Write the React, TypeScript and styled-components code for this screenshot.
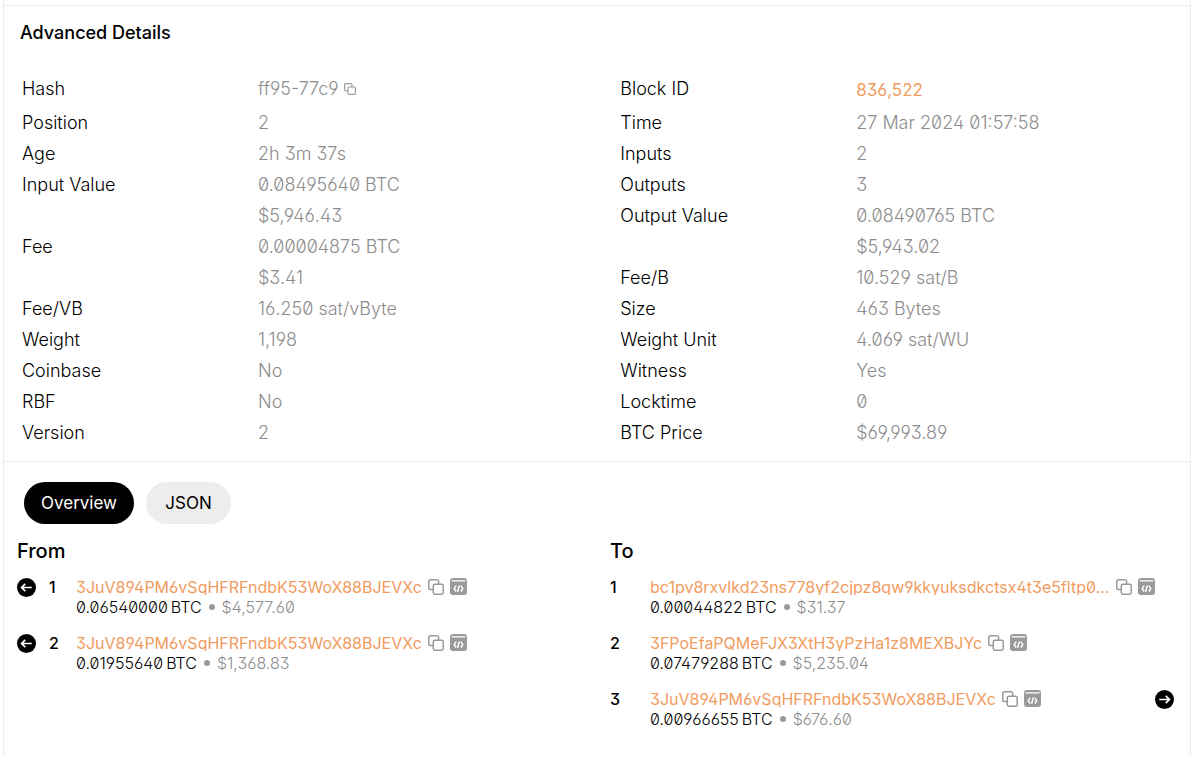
import React from "react";
import styled, { createGlobalStyle } from "styled-components";

const GlobalStyle = createGlobalStyle`
  *, *::before, *::after { box-sizing: border-box; }
  body {
    margin: 0;
    background: #fff;
    color: #000;
    font-family: Inter, "Liberation Sans", sans-serif;
    font-feature-settings: "zero" 1, "ss01" 1;
  }
  h2, h3, dl, dd, ol { margin: 0; padding: 0; }
  ol { list-style: none; }
  button { font: inherit; font-feature-settings: inherit; border: 0; cursor: pointer; }
`;

const Page = styled.main`
  min-height: 100vh;
  margin: 0 1px 0 3px;
  padding-top: 5px;
  border: solid #ececec;
  border-width: 0 1px;
`;

const Section = styled.section`
  border-top: 1px solid #ececec;
`;

const Title = styled.h2`
  padding: 16px 16px 0;
  font-size: 18px;
  line-height: 22px;
  font-weight: 500;
`;

const Details = styled.div`
  display: grid;
  grid-template-columns: 21fr 20fr;
  padding: 29px 0 13px 18px;
`;

const DetailList = styled.dl`
  min-width: 0;
  font-size: 18px;
  line-height: 31px;
  font-weight: 300;
`;

const DetailRow = styled.div<{ $tall?: boolean }>`
  display: grid;
  grid-template-columns: 236px 1fr;
  min-height: ${(p) => (p.$tall ? 34 : 31)}px;
`;

const Value = styled.dd`
  display: flex;
  flex-direction: column;
  align-items: flex-start;
  color: #8c8c8c;
`;

const HashValue = styled.span`
  display: flex;
  align-items: center;
  gap: 5px;
`;

const BlockLink = styled.a`
  padding-top: 2px;
  color: #f19c5f;
  font-size: 17px;
  font-weight: 400;
  text-decoration: none;
`;

const Tabs = styled.div`
  display: flex;
  gap: 12px;
  padding: 20px 20px 0;
`;

const Tab = styled.button<{ $active?: boolean }>`
  height: 42px;
  min-width: 85px;
  padding: 0 17px;
  border-radius: 21px;
  font-size: 17px;
  background: ${(p) => (p.$active ? "#000" : "#ededed")};
  color: ${(p) => (p.$active ? "#fff" : "#000")};
`;

const Transfers = styled.div`
  display: grid;
  grid-template-columns: 1fr 1fr;
  padding: 14px 0 24px;
`;

const Side = styled.div`
  min-width: 0;
  padding: 0 16px 0 13px;
`;

const SideTitle = styled.h3`
  font-size: 20px;
  line-height: 26px;
  font-weight: 500;
`;

const Entry = styled.li`
  display: flex;
  height: 56px;
  padding-top: 12px;
`;

const Direction = styled.span`
  display: flex;
  flex: none;
  width: 32px;
  padding-top: 2px;
`;

const Outgoing = styled.span`
  display: flex;
  flex: none;
  margin-left: auto;
  padding-top: 2px;
`;

const Index = styled.span<{ $width: number }>`
  flex: none;
  width: ${(p) => p.$width}px;
  font-size: 16px;
  line-height: 22px;
  font-weight: 500;
`;

const EntryBody = styled.div`
  min-width: 0;
`;

const AddressLine = styled.div`
  display: flex;
  align-items: center;
  height: 21px;
`;

const Address = styled.a`
  overflow: hidden;
  text-overflow: ellipsis;
  white-space: nowrap;
  color: #f19c5f;
  font-size: 16px;
  line-height: 16px;
  text-decoration: none;
`;

const IconButton = styled.button`
  display: flex;
  flex: none;
  margin-left: 6px;
  padding: 0;
  background: none;
  color: #999;
`;

const Amount = styled.div`
  display: flex;
  align-items: center;
  font-size: 16px;
  line-height: 20px;
  font-weight: 300;
`;

const Unit = styled.span`
  margin-left: 3px;
`;

const Dot = styled.span`
  width: 6px;
  height: 6px;
  margin: 0 7px;
  border-radius: 3px;
  background: #999;
`;

const Muted = styled.span`
  color: #8c8c8c;
`;

const CopyIcon = ({ size }: { size: number }) => (
  <svg width={size} height={size} viewBox="0 0 16 16" fill="none" stroke="currentColor" strokeWidth="1.5" aria-hidden="true">
    <path d="M5.2 10.6H2.2A1.4 1.4 0 0 1 .8 9.2V2.2A1.4 1.4 0 0 1 2.2.8h7A1.4 1.4 0 0 1 10.6 2.2v3" />
    <rect x="5.3" y="5.3" width="9.9" height="9.9" rx="1.4" />
  </svg>
);

const CodeIcon = () => (
  <svg width="17" height="17" viewBox="0 0 17 17" fill="none" aria-hidden="true">
    <rect width="17" height="17" rx="3" fill="#999" />
    <path d="M2 2.9H15" stroke="#fff" strokeWidth="1.3" strokeLinecap="round" />
    <path
      d="M5.8 8.2 4.2 10.6l1.6 2.4M11.2 8.2l1.6 2.4-1.6 2.4M9.2 8l-1.4 5.2"
      stroke="#fff"
      strokeWidth="1.5"
      strokeLinecap="round"
      strokeLinejoin="round"
    />
  </svg>
);

const ArrowIcon = ({ to }: { to: "left" | "right" }) => (
  <svg width="19" height="19" viewBox="0 0 19 19" fill="none" aria-hidden="true">
    <circle cx="9.5" cy="9.5" r="9.5" fill="#000" />
    <path
      d={to === "left" ? "M14.8 9.5H4.6M8.3 5.8 4.6 9.5l3.7 3.7" : "M4.2 9.5h10.2M10.7 5.8l3.7 3.7-3.7 3.7"}
      stroke="#fff"
      strokeWidth="1.7"
    />
  </svg>
);

type Detail = { label: string; value: string; fiat?: string; kind?: "hash" | "block" };

const leftDetails: Detail[] = [
  { label: "Hash", value: "ff95-77c9", kind: "hash" },
  { label: "Position", value: "2" },
  { label: "Age", value: "2h 3m 37s" },
  { label: "Input Value", value: "0.08495640 BTC", fiat: "$5,946.43" },
  { label: "Fee", value: "0.00004875 BTC", fiat: "$3.41" },
  { label: "Fee/VB", value: "16.250 sat/vByte" },
  { label: "Weight", value: "1,198" },
  { label: "Coinbase", value: "No" },
  { label: "RBF", value: "No" },
  { label: "Version", value: "2" },
];

const rightDetails: Detail[] = [
  { label: "Block ID", value: "836,522", kind: "block" },
  { label: "Time", value: "27 Mar 2024 01:57:58" },
  { label: "Inputs", value: "2" },
  { label: "Outputs", value: "3" },
  { label: "Output Value", value: "0.08490765 BTC", fiat: "$5,943.02" },
  { label: "Fee/B", value: "10.529 sat/B" },
  { label: "Size", value: "463 Bytes" },
  { label: "Weight Unit", value: "4.069 sat/WU" },
  { label: "Witness", value: "Yes" },
  { label: "Locktime", value: "0" },
  { label: "BTC Price", value: "$69,993.89" },
];

type Transfer = { address: string; amount: string; fiat: string; spent?: boolean };

const inputs: Transfer[] = [
  { address: "3JuV894PM6vSqHFRFndbK53WoX88BJEVXc", amount: "0.06540000", fiat: "$4,577.60" },
  { address: "3JuV894PM6vSqHFRFndbK53WoX88BJEVXc", amount: "0.01955640", fiat: "$1,368.83" },
];

const outputs: Transfer[] = [
  { address: "bc1pv8rxvlkd23ns778yf2cjpz8qw9kkyuksdkctsx4t3e5fltp0...", amount: "0.00044822", fiat: "$31.37" },
  { address: "3FPoEfaPQMeFJX3XtH3yPzHa1z8MEXBJYc", amount: "0.07479288", fiat: "$5,235.04" },
  { address: "3JuV894PM6vSqHFRFndbK53WoX88BJEVXc", amount: "0.00966655", fiat: "$676.60", spent: true },
];

const HashCopy = styled(IconButton)`
  margin-left: 0;
`;

const DetailColumn = ({ items }: { items: Detail[] }) => (
  <DetailList>
    {items.map((d) => (
      <DetailRow key={d.label} $tall={!!d.kind}>
        <dt>{d.label}</dt>
        <Value>
          {d.kind === "hash" ? (
            <HashValue>
              {d.value}
              <HashCopy aria-label="Copy hash">
                <CopyIcon size={12} />
              </HashCopy>
            </HashValue>
          ) : d.kind === "block" ? (
            <BlockLink href="#block">{d.value}</BlockLink>
          ) : (
            <span>{d.value}</span>
          )}
          {d.fiat && <span>{d.fiat}</span>}
        </Value>
      </DetailRow>
    ))}
  </DetailList>
);

const TransferRow = ({ item, index, incoming }: { item: Transfer; index: number; incoming?: boolean }) => (
  <Entry>
    {incoming && (
      <Direction>
        <ArrowIcon to="left" />
      </Direction>
    )}
    <Index $width={incoming ? 27 : 40}>{index}</Index>
    <EntryBody>
      <AddressLine>
        <Address href="#address">{item.address}</Address>
        <IconButton aria-label="Copy address">
          <CopyIcon size={16} />
        </IconButton>
        <IconButton aria-label="Show script">
          <CodeIcon />
        </IconButton>
      </AddressLine>
      <Amount>
        {item.amount}
        <Unit>BTC</Unit>
        <Dot />
        <Muted>{item.fiat}</Muted>
      </Amount>
    </EntryBody>
    {item.spent && (
      <Outgoing>
        <ArrowIcon to="right" />
      </Outgoing>
    )}
  </Entry>
);

export default function App() {
  return (
    <>
      <GlobalStyle />
      <Page>
        <Section>
          <Title>Advanced Details</Title>
          <Details>
            <DetailColumn items={leftDetails} />
            <DetailColumn items={rightDetails} />
          </Details>
        </Section>
        <Section>
          <Tabs>
            <Tab $active>Overview</Tab>
            <Tab>JSON</Tab>
          </Tabs>
          <Transfers>
            <Side>
              <SideTitle>From</SideTitle>
              <ol>
                {inputs.map((t, i) => (
                  <TransferRow key={i} item={t} index={i + 1} incoming />
                ))}
              </ol>
            </Side>
            <Side>
              <SideTitle>To</SideTitle>
              <ol>
                {outputs.map((t, i) => (
                  <TransferRow key={i} item={t} index={i + 1} />
                ))}
              </ol>
            </Side>
          </Transfers>
        </Section>
      </Page>
    </>
  );
}
